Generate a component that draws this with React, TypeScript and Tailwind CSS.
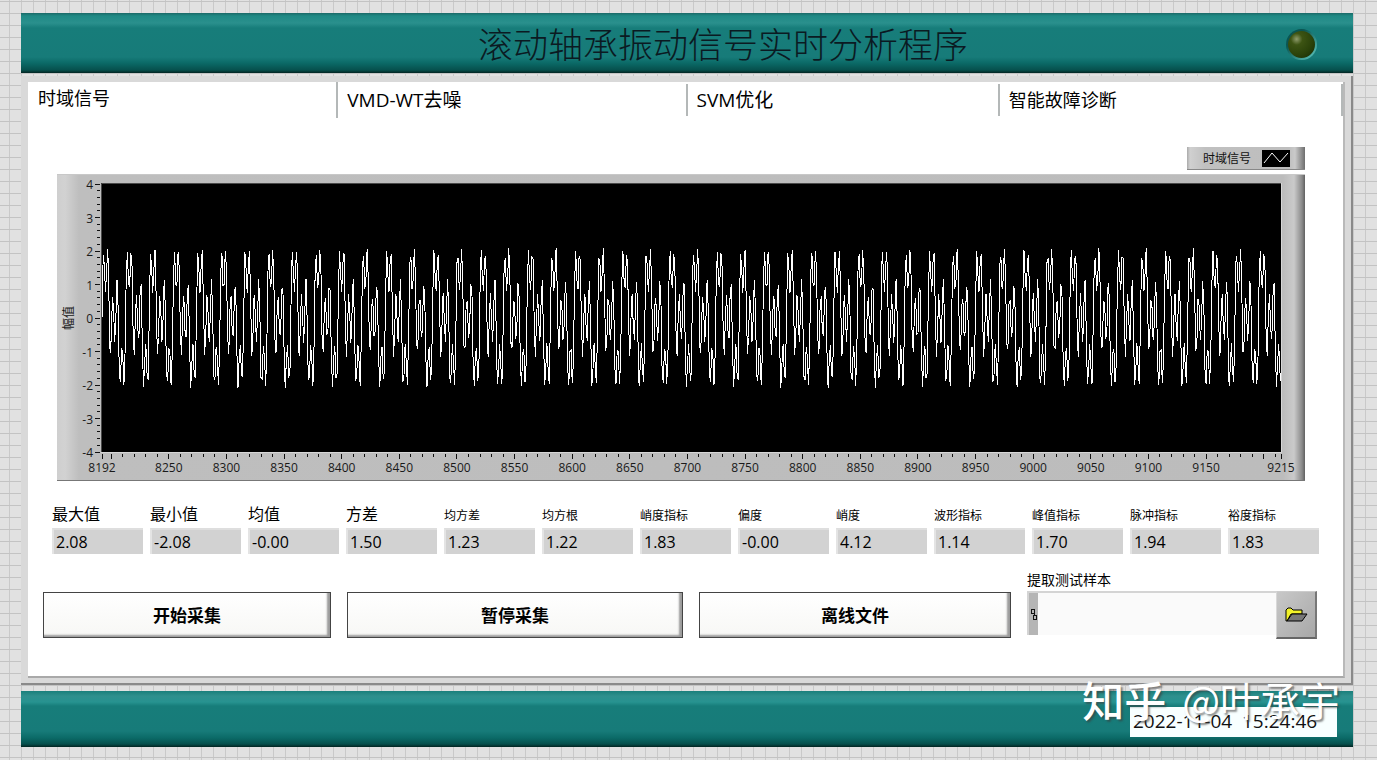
import { useState } from "react";

const TABS = [
  { name: "时域信号", size: "text-[18px]" },
  { name: "VMD-WT去噪", size: "text-[19px]" },
  { name: "SVM优化", size: "text-[19px]" },
  { name: "智能故障诊断", size: "text-[18px]" },
];

const METRICS = [
  { label: "最大值", value: "2.08", large: true },
  { label: "最小值", value: "-2.08", large: true },
  { label: "均值", value: "-0.00", large: true },
  { label: "方差", value: "1.50", large: true },
  { label: "均方差", value: "1.23" },
  { label: "均方根", value: "1.22" },
  { label: "峭度指标", value: "1.83" },
  { label: "偏度", value: "-0.00" },
  { label: "峭度", value: "4.12" },
  { label: "波形指标", value: "1.14" },
  { label: "峰值指标", value: "1.70" },
  { label: "脉冲指标", value: "1.94" },
  { label: "裕度指标", value: "1.83" },
];

const ACTIONS = ["开始采集", "暂停采集", "离线文件"];

const FIRST = 8192;
const LAST = 9215;
const PLOT = { left: 45, right: 1224, top: 9, bottom: 277 };

const toX = (n: number) =>
  PLOT.left + ((n - FIRST) / (LAST - FIRST)) * (PLOT.right - PLOT.left);
const toY = (v: number) =>
  PLOT.top + ((4 - v) / 8) * (PLOT.bottom - PLOT.top);

// 50 Hz + 100 Hz + 250 Hz, 采样率 1024 Hz
const wave = Array.from({ length: LAST - FIRST + 1 }, (_, i) => {
  const w = (2 * Math.PI * 50 * i) / 1024;
  const v = Math.sin(w) + Math.sin(2 * w) + Math.sin(5 * w);
  return `${toX(FIRST + i).toFixed(1)},${toY(v).toFixed(1)}`;
}).join(" ");

const xTicks = [FIRST];
for (let n = 8200; n <= 9210; n += 10) xTicks.push(n);
xTicks.push(LAST);

const isMajorX = (n: number) => n % 50 === 0 || n === FIRST || n === LAST;
const hasLabel = (n: number) => isMajorX(n) && n !== 8200 && n !== 9200;

const yTicks = Array.from({ length: 41 }, (_, i) => i);

function WaveChart() {
  return (
    <div className="bg-[linear-gradient(90deg,#cfcfcf_0,#d2d2d2_8px,#bebebe_22px,#bcbcbc_calc(100%-22px),#cacaca_calc(100%-11px),#8a8a8a_calc(100%-3px),#606060_100%)] border-t border-b border-t-[#c8c8c8] border-b-[#777]">
      <svg viewBox="0 0 1248 305" className="block w-full" role="img" aria-label="时域信号波形">
        <rect x="44" y="8" width="1180" height="269" fill="#000" />
        <path d="M44.500 277V8.500H1224" fill="none" stroke="#4a4a4a" />
        <path d="M44 277.500H1224.500V8" fill="none" stroke="#d6d6d6" />
        <polyline
          points={wave}
          fill="none"
          stroke="#fff"
          strokeWidth="1"
          shapeRendering="crispEdges"
        />
        <g stroke="#111" shapeRendering="crispEdges">
          {yTicks.map((i) => (
            <line
              key={i}
              x1={i % 5 === 0 ? 38 : 40}
              x2={43}
              y1={toY(4 - i / 5)}
              y2={toY(4 - i / 5)}
            />
          ))}
          {xTicks.map((n) => (
            <line key={n} x1={toX(n)} x2={toX(n)} y1={279} y2={isMajorX(n) ? 284 : 282} />
          ))}
        </g>
        <g fontSize="12" fill="#1a1a1a">
          {[4, 3, 2, 1, 0, -1, -2, -3, -4].map((v) => (
            <text key={v} x={36} y={toY(v) + 5} textAnchor="end">
              {v}
            </text>
          ))}
          {xTicks.filter(hasLabel).map((n) => (
            <text key={n} x={toX(n)} y={297} textAnchor="middle">
              {n}
            </text>
          ))}
          <text transform="translate(16 143) rotate(-90)" textAnchor="middle">
            幅值
          </text>
        </g>
      </svg>
    </div>
  );
}

function Legend() {
  return (
    <div className="flex h-[23px] items-center gap-[11px] border-b border-[#888] bg-[linear-gradient(90deg,#aaa_0,#d0d0d0_3px,#c0c0c0_18px,#bebebe_calc(100%-16px),#cacaca_calc(100%-10px),#6e6e6e_100%)] pl-4 pr-[15px] text-[12px] text-[#111]">
      <span className="pt-[2px]">时域信号</span>
      <svg width="28" height="17" viewBox="0 0 28 17">
        <rect width="28" height="17" fill="#000" />
        <path d="M2 13L10 3L18 12L26 3" fill="none" stroke="#fff" />
      </svg>
    </div>
  );
}

function FolderIcon() {
  return (
    <svg width="23" height="16" viewBox="0 0 23 16">
      <path d="M1 14V3L3 1H6L8 3H17V7H6L2 14Z" fill="#f2f22a" stroke="#000" />
      <path d="M2 14L7 7H22L17 14Z" fill="#777" stroke="#000" />
    </svg>
  );
}

function FilePicker() {
  return (
    <div>
      <label htmlFor="sample" className="block text-[14px] leading-[22px] text-black">
        提取测试样本
      </label>
      <div className="flex h-12 items-stretch">
        <div className="mb-1 flex flex-1 border-l-2 border-t-2 border-[#d4d4d4] bg-[#fafafa]">
          <span className="flex w-[9px] items-center justify-center bg-[#b5b5b5]">
            <svg width="7" height="11" viewBox="0 0 7 11" shapeRendering="crispEdges">
              <path d="M1 0.500H4V4.500H1ZM4 4.500V6.500M3.500 6.500H6.500V10.500H3.500Z" fill="none" stroke="#111" />
            </svg>
          </span>
          <input id="sample" type="text" className="w-0 flex-1 bg-transparent px-2 outline-none" />
        </div>
        <button
          type="button"
          aria-label="浏览"
          className="flex w-[41px] items-center justify-center border-b-2 border-r-2 border-l border-t border-b-[#666] border-r-[#777] border-l-[#d8d8d8] border-t-[#ccc] bg-linear-to-br from-[#c8c8c8] to-[#a8a8a8]"
        >
          <FolderIcon />
        </button>
      </div>
    </div>
  );
}

export default function App() {
  const [active, setActive] = useState(0);

  return (
    <div className="relative min-h-screen bg-[#e1e1e1] bg-[linear-gradient(#c3c3c3_1px,transparent_1px),linear-gradient(90deg,#c9c9c9_1px,transparent_1px)] bg-size-[12px_12px] bg-position-[9px_1px] pb-3 pl-[21px] pr-6 pt-[13px] font-['Open_Sans','Noto_Sans_CJK_SC',sans-serif] text-black">
      {/* 标题栏 */}
      <header className="relative flex h-[60px] items-center justify-center bg-[linear-gradient(#1b6a68_0,#1f8a85_3px,#2a908d_10px,#177d7a_15px,#177b79_44px,#0b6a67_50px,#06504d_57px,#022421_60px)] pl-[72px]">
        <h1 className="font-['Noto_Sans_CJK_SC',sans-serif] text-[35px] font-light leading-[44px] text-[#0b1a22]">
          滚动轴承振动信号实时分析程序
        </h1>
        <span className="absolute right-9 top-4 size-[31px] rounded-full bg-[linear-gradient(135deg,#0a5552_30%,#5cc4bc_95%)] p-[2px]">
          <span className="block size-[27px] rounded-full bg-[radial-gradient(circle_at_32%_30%,#8f9c6c_0,#3d5413_22%,#2b420a_60%,#142603_100%)]" />
        </span>
      </header>

      {/* 选项卡面板 */}
      <main className="mt-[3px] border-b-2 border-r-2 border-b-[#8a8a8a] border-r-[#8a8a8a] bg-[#d9d9d9] pb-[5px] pl-[7px] pr-[6px] pt-[6px]">
        <div className="border-b-2 border-r-2 border-b-[#a9a9a9] border-r-[#b9b9b9] bg-white">
          <div role="tablist" className="grid grid-cols-[310fr_349fr_312fr_343fr]">
            {TABS.map((tab, i) => (
              <button
                key={tab.name}
                type="button"
                role="tab"
                aria-selected={i === active}
                onClick={() => setActive(i)}
                className={`${tab.size} border-r-2 border-[#b4b8b8] text-left ${
                  i === active ? "h-9 pb-1 pl-[10px]" : "mt-[2px] h-8 pl-[9px]"
                }`}
              >
                {tab.name}
              </button>
            ))}
          </div>

          <section className="pl-[29px] pr-[38px] pt-[29px]">
            <div className="mb-1 flex justify-end">
              <Legend />
            </div>
            <WaveChart />
          </section>

          <section className="mt-[22px] grid grid-cols-13 gap-[7px] pl-6 pr-[24px]">
            {METRICS.map((m, i) => (
              <div key={m.label} className="min-w-0">
                <label
                  htmlFor={`metric-${i}`}
                  className={
                    m.large
                      ? "block h-[25px] text-[16px] leading-[22px]"
                      : "block h-[25px] text-[12px] leading-[26px]"
                  }
                >
                  {m.label}
                </label>
                <input
                  id={`metric-${i}`}
                  readOnly
                  value={m.value}
                  className="block h-[26px] w-full border-l-2 border-t-2 border-l-[#e4e4e4] border-t-[#dedede] bg-[#d2d2d2] pl-[2px] text-[16px] leading-6 outline-none"
                />
              </div>
            ))}
          </section>

          <section className="mt-[15px] grid grid-cols-[288fr_336fr_312fr_290fr] items-end gap-4 pb-[37px] pl-[15px] pr-[26px]">
            {ACTIONS.map((text) => (
              <button
                key={text}
                type="button"
                className="mb-px h-[46px] border border-[#444] bg-linear-to-b from-white to-[#f7f7f5] pt-px text-[17px] font-bold shadow-[inset_-3px_-2px_2px_#9b9b9b]"
              >
                {text}
              </button>
            ))}
            <FilePicker />
          </section>
        </div>
      </main>

      {/* 底栏 */}
      <footer className="relative mt-[6px] flex h-14 items-end justify-end bg-[linear-gradient(#1a7f7b_0,#2f8f8d_5px,#279390_11px,#177d7a_15px,#177b79_40px,#0b6a67_47px,#06504d_53px,#022421_56px)] pb-[10px] pr-4">
        <time className="h-[30px] w-[207px] whitespace-pre bg-[#f8ffff] pl-[3px] text-[19px] leading-[28px] text-[#111]">
          {"2022-11-04  15:24:46"}
        </time>
        <div className="pointer-events-none absolute -top-[18px] right-[13px] flex items-center gap-4 whitespace-nowrap font-['Noto_Sans_CJK_SC',sans-serif] text-[40px] leading-[52px] text-white [text-shadow:2px_2px_2px_rgba(60,60,60,0.6)]">
          <span className="text-[42px] font-medium">知乎</span>
          <span>@叶承宇</span>
        </div>
      </footer>
    </div>
  );
}
